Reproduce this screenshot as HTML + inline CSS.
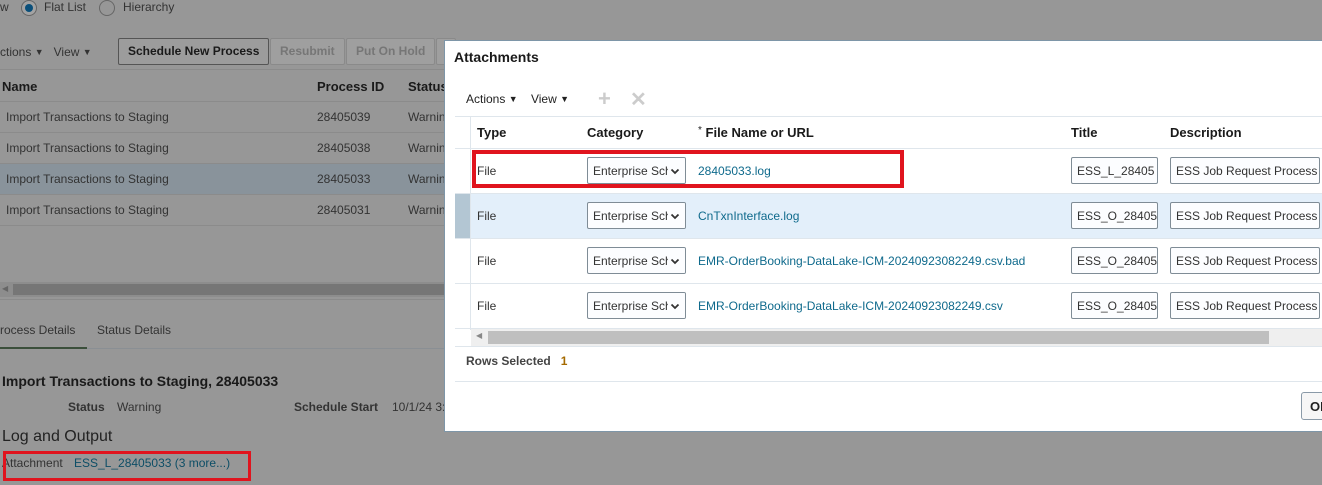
<!DOCTYPE html>
<html><head><style>
*{margin:0;padding:0;box-sizing:border-box}
body{width:1322px;height:485px;overflow:hidden;background:#979797;font-family:"Liberation Sans",Arial,sans-serif;font-size:12px;color:#222;position:relative}
.a{position:absolute;white-space:nowrap}
.bg{color:#333}
.b{font-weight:bold}
.btn{position:absolute;top:38px;height:27px;border:1px solid #8a8a8a;background:#9f9f9f;color:#767676;font-weight:bold;font-size:12px;line-height:25px;padding:0 9px;border-radius:2px}
.hl{position:absolute;height:1px;background:#8b8b8b}
.sel{position:absolute;height:27px;border:1px solid #7f8c96;background:#fcfdff;border-radius:2px;font-size:12px;color:#333;display:flex;align-items:center;padding-left:5px;overflow:hidden}
.lnk{color:#0f6a8c}
.dl{position:absolute;height:1px;background:#dfe6ec}
.tri{font-size:9px;vertical-align:1px}
.chev{position:absolute;right:0;top:0;width:17px;height:25px;background:#fcfdff}
</style></head><body>
<div class="a bg" style="left:0;top:0">w</div>
<div class="a" style="left:21px;top:0;width:16px;height:16px;border:1px solid #666;border-radius:50%;background:#a3a3a3"><div style="margin:3px;width:8px;height:8px;border-radius:50%;background:#0a4f7a"></div></div>
<div class="a bg" style="left:44px;top:0">Flat List</div>
<div class="a" style="left:99px;top:0;width:16px;height:16px;border:1px solid #666;border-radius:50%"></div>
<div class="a bg" style="left:123px;top:0">Hierarchy</div>
<div class="a bg" style="left:0;top:45px">ctions <span class="tri">▼</span>&nbsp;&nbsp; View <span class="tri">▼</span></div>
<div class="btn" style="left:118px;color:#1a1a1a;border-color:#555;background:#9c9c9c">Schedule New Process</div>
<div class="btn" style="left:270px">Resubmit</div>
<div class="btn" style="left:346px">Put On Hold</div>
<div class="btn" style="left:436px;width:20px"></div>
<div class="hl" style="left:0;top:69px;width:444px"></div>
<div class="a b" style="left:2px;top:79px;font-size:13px;color:#1a1a1a">Name</div>
<div class="a b" style="left:317px;top:79px;font-size:13px;color:#1a1a1a">Process ID</div>
<div class="a b" style="left:408px;top:79px;font-size:13px;color:#1a1a1a">Status</div>
<div class="hl" style="left:0;top:101px;width:444px"></div>
<div class="a" style="left:0;top:163px;width:444px;height:31px;background:#89939b"></div>
<div class="a bg" style="left:6px;top:110px">Import Transactions to Staging</div><div class="a bg" style="left:317px;top:110px">28405039</div><div class="a bg" style="left:408px;top:110px">Warnin</div>
<div class="hl" style="left:0;top:132px;width:444px"></div>
<div class="a bg" style="left:6px;top:141px">Import Transactions to Staging</div><div class="a bg" style="left:317px;top:141px">28405038</div><div class="a bg" style="left:408px;top:141px">Warnin</div>
<div class="hl" style="left:0;top:163px;width:444px"></div>
<div class="a bg" style="left:6px;top:172px">Import Transactions to Staging</div><div class="a bg" style="left:317px;top:172px">28405033</div><div class="a bg" style="left:408px;top:172px">Warnin</div>
<div class="hl" style="left:0;top:194px;width:444px"></div>
<div class="a bg" style="left:6px;top:203px">Import Transactions to Staging</div><div class="a bg" style="left:317px;top:203px">28405031</div><div class="a bg" style="left:408px;top:203px">Warnin</div>
<div class="hl" style="left:0;top:225px;width:444px"></div>
<div class="a" style="left:0;top:282px;width:444px;height:15px;background:#8d8d8d"></div>
<div class="a" style="left:13px;top:284px;width:431px;height:11px;background:#767676"></div>
<div class="a" style="left:2px;top:284px;font-size:8px;color:#666">◀</div>
<div class="hl" style="left:0;top:299px;width:444px"></div>
<div class="a bg" style="left:0;top:323px">rocess Details</div>
<div class="a bg" style="left:97px;top:323px">Status Details</div>
<div class="a" style="left:0;top:347px;width:87px;height:2px;background:#3b4f3b"></div>
<div class="hl" style="left:87px;top:348px;width:357px;background:#8a8f94"></div>
<div class="a b" style="left:2px;top:373px;font-size:14px;color:#1a1a1a">Import Transactions to Staging, 28405033</div>
<div class="a b bg" style="left:68px;top:400px">Status</div>
<div class="a bg" style="left:117px;top:400px">Warning</div>
<div class="a b bg" style="left:294px;top:400px">Schedule Start</div>
<div class="a bg" style="left:392px;top:400px">10/1/24 3:</div>
<div class="a" style="left:2px;top:428px;font-size:16px;color:#222">Log and Output</div>
<div class="a bg" style="left:2px;top:456px">Attachment</div>
<div class="a" style="left:74px;top:456px;color:#0d4e66">ESS_L_28405033 (3 more...)</div>
<div class="a" style="left:3px;top:451px;width:248px;height:30px;border:3px solid #e0141e"></div>

<div class="a" style="left:444px;top:40px;width:880px;height:392px;background:#fff;border:1px solid #7e96a8"></div>
<div class="a b" style="left:454px;top:49px;font-size:14px;color:#1a1a1a">Attachments</div>
<div class="a" style="left:466px;top:92px;color:#222">Actions <span class="tri">▼</span>&nbsp;&nbsp;&nbsp; View <span class="tri">▼</span></div>
<div class="a b" style="left:598px;top:86px;font-size:22px;color:#ccc">+</div>
<div class="a b" style="left:630px;top:87px;font-size:20px;color:#ccc">✕</div>
<div class="dl" style="left:455px;top:116px;width:867px"></div>
<div class="a" style="left:470px;top:116px;width:1px;height:214px;background:#dfe6ec"></div>
<div class="a b" style="left:477px;top:125px;font-size:13px;color:#1a1a1a">Type</div>
<div class="a b" style="left:587px;top:125px;font-size:13px;color:#1a1a1a">Category</div>
<div class="a b" style="left:698px;top:125px;font-size:13px;color:#1a1a1a"><span style="font-weight:normal;font-size:10px;vertical-align:top">*</span> File Name or URL</div>
<div class="a b" style="left:1071px;top:125px;font-size:13px;color:#1a1a1a">Title</div>
<div class="a b" style="left:1170px;top:125px;font-size:13px;color:#1a1a1a">Description</div>
<div class="dl" style="left:455px;top:148px;width:867px"></div>
<div class="a" style="left:471px;top:194px;width:851px;height:44px;background:#e3effa"></div>
<div class="a" style="left:455px;top:194px;width:15px;height:44px;background:#b3c6d3"></div>
<div class="dl" style="left:455px;top:193px;width:867px"></div>
<div class="dl" style="left:455px;top:238px;width:867px"></div>
<div class="dl" style="left:455px;top:283px;width:867px"></div>
<div class="dl" style="left:455px;top:328px;width:867px"></div>

<svg width="0" height="0" style="position:absolute"><defs><symbol id="cv" viewBox="0 0 10 10"><path d="M1.5 3.5 L5 7 L8.5 3.5" fill="none" stroke="#333" stroke-width="1.8"/></symbol></defs></svg>

<div class="a" style="left:477px;top:164px;color:#333">File</div>
<div class="sel" style="left:587px;top:157px;width:99px">Enterprise Sch<span class="chev"><svg width="10" height="10" style="margin:8px 0 0 2px"><use href="#cv"/></svg></span></div>
<div class="a lnk" style="left:698px;top:164px">28405033.log</div>
<div class="sel" style="left:1071px;top:157px;width:87px">ESS_L_28405</div>
<div class="sel" style="left:1170px;top:157px;width:150px">ESS Job Request Process</div>

<div class="a" style="left:477px;top:209px;color:#333">File</div>
<div class="sel" style="left:587px;top:202px;width:99px">Enterprise Sch<span class="chev"><svg width="10" height="10" style="margin:8px 0 0 2px"><use href="#cv"/></svg></span></div>
<div class="a lnk" style="left:698px;top:209px">CnTxnInterface.log</div>
<div class="sel" style="left:1071px;top:202px;width:87px">ESS_O_28405</div>
<div class="sel" style="left:1170px;top:202px;width:150px">ESS Job Request Process</div>

<div class="a" style="left:477px;top:254px;color:#333">File</div>
<div class="sel" style="left:587px;top:247px;width:99px">Enterprise Sch<span class="chev"><svg width="10" height="10" style="margin:8px 0 0 2px"><use href="#cv"/></svg></span></div>
<div class="a lnk" style="left:698px;top:254px">EMR-OrderBooking-DataLake-ICM-20240923082249.csv.bad</div>
<div class="sel" style="left:1071px;top:247px;width:87px">ESS_O_28405</div>
<div class="sel" style="left:1170px;top:247px;width:150px">ESS Job Request Process</div>

<div class="a" style="left:477px;top:299px;color:#333">File</div>
<div class="sel" style="left:587px;top:292px;width:99px">Enterprise Sch<span class="chev"><svg width="10" height="10" style="margin:8px 0 0 2px"><use href="#cv"/></svg></span></div>
<div class="a lnk" style="left:698px;top:299px">EMR-OrderBooking-DataLake-ICM-20240923082249.csv</div>
<div class="sel" style="left:1071px;top:292px;width:87px">ESS_O_28405</div>
<div class="sel" style="left:1170px;top:292px;width:150px">ESS Job Request Process</div>

<div class="a" style="left:471px;top:329px;width:851px;height:17px;background:#efefef"></div>
<div class="a" style="left:488px;top:331px;width:781px;height:13px;background:#bfbfbf"></div>
<div class="a" style="left:476px;top:331px;font-size:8px;color:#888">◀</div>
<div class="dl" style="left:455px;top:346px;width:867px"></div>
<div class="a b" style="left:466px;top:354px;color:#444">Rows Selected&nbsp;&nbsp; <span style="color:#a56a00">1</span></div>
<div class="dl" style="left:455px;top:381px;width:867px"></div>
<div class="a b" style="left:1301px;top:392px;width:30px;height:28px;border:1px solid #8a9aa8;border-radius:3px;background:#f6f6f6;padding:6px 0 0 8px;font-size:13px">OK</div>
<div class="a" style="left:472px;top:150px;width:432px;height:38px;border:4px solid #e0141e"></div>
</body></html>
